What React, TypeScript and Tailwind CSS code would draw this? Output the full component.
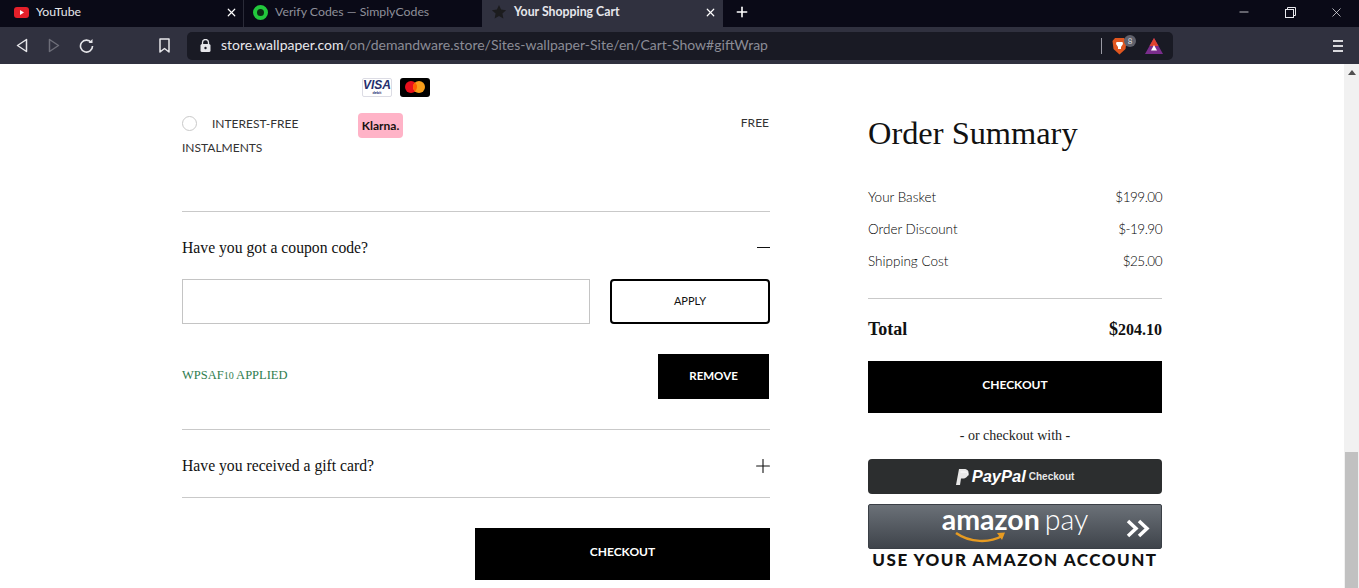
import React from 'react';
import { Minus, Plus, X } from 'lucide-react';

const sans = 'font-["Lato","Liberation_Sans",sans-serif]';
const serif = 'font-["Liberation_Serif",serif]';

const YoutubeIcon = () => (
  <svg width="15" height="11" viewBox="0 0 15 11">
    <rect width="15" height="11" rx="3" fill="#e5202a" />
    <path d="M6 3l4 2.500L6 8z" fill="#fff" />
  </svg>
);

const Tab: React.FC<{ title: string; icon: React.ReactNode; active?: boolean; close?: boolean; divider?: boolean; width: string; pad: string }> = ({
  title,
  icon,
  active,
  close,
  divider,
  width,
  pad,
}) => (
  <div className={`${width} ${pad} ${active ? 'bg-[#30313f]' : ''} ${divider ? 'border-r border-[#2a2b38]' : ''} flex h-full items-center pb-[3px]`}>
    <div className="flex w-[16px] justify-center">{icon}</div>
    <span className={`ml-[7px] flex-1 text-[12.300px] ${active ? 'font-bold text-[#e6e7ec]' : title === 'YouTube' ? 'text-[#e6e7ec]' : 'text-[#8f909a]'}`}>{title}</span>
    {close && <X className="text-white" size={13} strokeWidth={2.2} />}
  </div>
);

const TabStrip = () => (
  <div className="flex h-[27px] items-center bg-[#0a0a17]">
    <Tab width="w-[244px]" pad="pl-[13px] pr-[5px]" divider close title="YouTube" icon={<YoutubeIcon />} />
    <Tab
      width="w-[238px]"
      pad="pl-[8px]"
      title="Verify Codes — SimplyCodes"
      icon={<div className="h-[15px] w-[15px] rounded-full border-[4px] border-[#22c83c] bg-[#0c2c14]" />}
    />
    <Tab
      width="w-[241px]"
      pad="pl-[9px] pr-[6px]"
      active
      close
      title="Your Shopping Cart"
      icon={
        <svg width="16" height="16" viewBox="0 0 16 16">
          <path d="M8 1l2.100 4.600 5 .6-3.700 3.400 1 5L8 11.900 3.600 14.600l1-5L.9 6.200l5-.6z" fill="#1c1c1e" />
        </svg>
      }
    />
    <div className="flex h-full items-center pb-[3px]">
      <Plus className="ml-[11px] text-white" size={16} strokeWidth={2.4} />
    </div>
    <div className="flex-1" />
    <div className="flex h-full items-center pb-[3px]">
      <Minus className="mr-[34px] text-[#e8e8ec]" size={14} strokeWidth={1.4} />
      <svg className="mr-[33px]" width="11" height="11" viewBox="0 0 11 11" fill="none" stroke="#e8e8ec" strokeWidth="1">
        <rect x="0.500" y="2.500" width="8" height="8" />
        <path d="M2.500 2.500v-2h8v8h-2" />
      </svg>
      <X className="mr-[15px] text-[#e8e8ec]" size={15} strokeWidth={1.2} />
    </div>
  </div>
);

const Toolbar = () => (
  <div className="flex h-[37px] items-center bg-[#30313f]">
    <svg className="ml-[16px]" width="12" height="15" viewBox="0 0 12 15" fill="none" stroke="#e6e6ea" strokeWidth="1.500">
      <path d="M10.500 1.500v12L1.500 7.500z" strokeLinejoin="round" />
    </svg>
    <svg className="ml-[20px]" width="12" height="15" viewBox="0 0 12 15" fill="none" stroke="#6c6d78" strokeWidth="1.500">
      <path d="M1.500 1.500v12l9-6z" strokeLinejoin="round" />
    </svg>
    <svg className="ml-[19px]" width="15" height="15" viewBox="0 0 15 15" fill="none" stroke="#e6e6ea" strokeWidth="1.600">
      <path d="M12.300 4.500A6 6 0 1 0 13.500 8" />
      <path d="M13.500 1v4h-4" fill="#e6e6ea" stroke="none" />
    </svg>
    <svg className="ml-[65px]" width="11" height="15" viewBox="0 0 11 15" fill="none" stroke="#e6e6ea" strokeWidth="1.500">
      <path d="M1 1h9v13L5.500 10.500 1 14z" strokeLinejoin="round" />
    </svg>
    <div className="ml-[17px] flex h-[28px] w-[986px] items-center rounded-[5px] bg-[#191a24] pb-[2px] pl-[13px]">
      <svg className="mt-[2px]" width="11" height="13" viewBox="0 0 11 13">
        <path d="M2.500 5V3.500a3 3 0 0 1 6 0V5" fill="none" stroke="#e6e6ea" strokeWidth="1.300" />
        <rect x="0.500" y="5" width="10" height="8" rx="1.500" fill="#e6e6ea" />
        <circle cx="5.500" cy="9" r="1.200" fill="#191a24" />
      </svg>
      <span className="ml-[10px] flex-1 text-[14px] text-[#8b8c96]">
        <span className="text-[#e8e8ec]">store.wallpaper.com</span>/on/demandware.store/Sites-wallpaper-Site/en/Cart-Show#giftWrap
      </span>
      <div className="mt-[2px] h-[16px] w-px bg-[#9a9aa4]" />
      <div className="relative ml-[10px] mt-[2px]">
        <svg className="block" width="15" height="18" viewBox="0 0 15 18">
          <path d="M3 1h9l2.500 3-1 8L7.500 17.500 1.500 12l-1-8z" fill="#e0561f" />
          <path d="M4.500 5h6l.5 2-2 3v2H6v-2L4 7z" fill="#fff" />
        </svg>
        <div className="absolute left-[12px] top-[-2px] flex h-[12px] w-[12px] items-center justify-center rounded-full bg-[#5f606b] text-[8px] text-[#d8d8dc]">8</div>
      </div>
      <svg className="ml-[18px] mt-[2px]" width="18" height="16" viewBox="0 0 18 16">
        <path d="M9 0l9 16H0z" fill="#7a2d8c" />
        <path d="M9 0l4.500 8h-9z" fill="#e0432f" />
        <path d="M9 7l3 5.500H6z" fill="#fff" />
      </svg>
      <div className="w-[10px]" />
    </div>
    <div className="flex-1" />
    <div className="mr-[16px] flex w-[10px] flex-col gap-[3px]">
      <div className="h-[2px] bg-[#d8d8dc]" />
      <div className="h-[2px] bg-[#d8d8dc]" />
      <div className="h-[2px] bg-[#d8d8dc]" />
    </div>
  </div>
);

const VisaCard = () => (
  <div className="flex h-[19px] w-[30px] flex-col items-center justify-center rounded-[2px] border border-[#dcdce4] bg-white leading-none">
    <span className='font-["Liberation_Sans",sans-serif] text-[12px] font-bold italic leading-[11px] text-[#262f6e]'>VISA</span>
    <span className={`${sans} text-[4px] font-bold leading-[4px] text-[#262f6e]`}>debit</span>
  </div>
);

const MastercardIcon = () => (
  <div className="flex h-[19px] w-[30px] items-center justify-center rounded-[3px] bg-black pb-[2px]">
    <svg width="20" height="12" viewBox="0 0 20 12">
      <circle cx="6" cy="6" r="6" fill="#e8101c" />
      <circle cx="14" cy="6" r="6" fill="#f79e1b" />
      <path d="M10 1.500a6 6 0 0 1 0 9a6 6 0 0 1 0-9z" fill="#ff5f00" />
    </svg>
  </div>
);

const BlackButton: React.FC<{ label: string; className: string }> = ({ label, className }) => (
  <div className={`${className} ${sans} flex items-center justify-center bg-black font-bold text-white`}>{label}</div>
);

const LeftColumn = () => (
  <div className="w-[588px] pt-[14px] text-[#333]">
    <div className="flex gap-[8px] pl-[180px]">
      <VisaCard />
      <MastercardIcon />
    </div>

    <div className={`${sans} mt-[16px] flex text-[12px]`}>
      <div className="-mt-[1px] w-[176px] leading-[24px]">
        <span className="mr-[15px] inline-block h-[15px] w-[15px] rounded-full border border-[#c9c9c9] align-[-3px]" />
        INTEREST-FREE
        <br />
        INSTALMENTS
      </div>
      <div className="flex h-[25px] w-[45px] items-center justify-center rounded-[4px] bg-[#ffb3c7] text-[12px] font-bold text-[#17120f]">Klarna.</div>
      <div className="flex-1 pr-[1px] text-right leading-[20px]">FREE</div>
    </div>

    <div className="mt-[51px] border-t border-[#c9c9c9]" />

    <div className={`${serif} flex h-[72px] items-center justify-between text-[15.700px] text-[#111]`}>
      <span className="-mt-[1px]">Have you got a coupon code?</span>
      <div className="-mt-[1px] h-px w-[13px] bg-[#111]" />
    </div>

    <div className="-mt-[5px] flex justify-between">
      <div className="h-[45px] w-[408px] border border-[#c4c4c4]" />
      <div className={`${sans} flex h-[45px] w-[160px] items-center justify-center rounded-[4px] border-2 border-black text-[11px] text-[#111]`}>APPLY</div>
    </div>

    <div className="mt-[30px] flex items-center justify-between pr-[1px]">
      <span className={`${serif} -mt-[3px] text-[12.500px] text-[#2f7d4f]`}>
        WPSAF<span className="text-[10px]">10</span> APPLIED
      </span>
      <BlackButton label="REMOVE" className="h-[45px] w-[111px] pb-[1px] text-[11.500px]" />
    </div>

    <div className="mt-[30px] border-t border-[#c9c9c9]" />

    <div className={`${serif} flex h-[67px] items-center justify-between pt-[4px] text-[15.700px] text-[#111]`}>
      <span>Have you received a gift card?</span>
      <Plus size={22} strokeWidth={1.2} className="-mr-[4px] text-[#111]" />
    </div>

    <div className="border-t border-[#c9c9c9]" />

    <div className="mt-[30px] flex justify-end">
      <BlackButton label="CHECKOUT" className="h-[52px] w-[295px] pb-[4px] text-[12px]" />
    </div>
  </div>
);

const SummaryRow: React.FC<{ label: string; value: string }> = ({ label, value }) => (
  <div className={`${sans} flex h-[32px] items-center justify-between text-[13.500px] font-light text-black`}>
    <span>{label}</span>
    <span className="tracking-[-0.500px]">{value}</span>
  </div>
);

const PayPalButton = () => (
  <div className="flex h-[35px] items-center justify-center rounded-[4px] bg-[#2c2e2f]">
    <svg width="13" height="16" viewBox="0 0 13 16">
      <path d="M3 0h5c3 0 5 1.500 4.500 4.500C12 8 9.500 9.500 7 9.500H5L4 16H0z" fill="#e8e8e8" />
      <path d="M4.500 3H9c2 0 3.500 1 3 3.500" fill="none" stroke="#fff" strokeWidth="1" />
    </svg>
    <span className={`ml-[3px] font-["Liberation_Sans",sans-serif] text-[16.500px] font-bold italic text-white`}>PayPal</span>
    <span className={`ml-[3px] font-["Liberation_Sans",sans-serif] text-[10px] font-bold text-[#e8e8e8]`}>Checkout</span>
  </div>
);

const AmazonButton = () => (
  <div className="relative flex h-[45px] justify-center rounded-[2px] border border-[#3a3f46] bg-gradient-to-b from-[#6b7178] to-[#3f444b]">
    <span className={`${sans} -mt-[4px] text-[28.500px] font-bold leading-[36px] text-white`}>
      amazon<span className="ml-[5px] font-light">pay</span>
    </span>
    <svg className="absolute left-[86px] top-[26px]" width="52" height="13" viewBox="0 0 52 13" fill="none">
      <path d="M1 2c14 10 34 10 46 3" stroke="#e79b21" strokeWidth="2.500" />
      <path d="M42 2l8-.5L47 9z" fill="#e79b21" />
    </svg>
    <svg className="absolute right-[11px] top-[14px]" width="24" height="19" viewBox="0 0 24 19" fill="none" stroke="#fff" strokeWidth="3.500">
      <path d="M2 2l8 7.500-8 7.500M13 2l8 7.500-8 7.500" />
    </svg>
  </div>
);

const RightColumn = () => (
  <div className="w-[294px]">
    <h1 className={`${serif} mt-[49px] text-[32.400px] leading-[40px] text-[#111]`}>Order Summary</h1>
    <div className="mt-[28px]">
      <SummaryRow label="Your Basket" value="$199.00" />
      <SummaryRow label="Order Discount" value="$-19.90" />
      <SummaryRow label="Shipping Cost" value="$25.00" />
    </div>
    <div className="mt-[21px] border-t border-[#c9c9c9]" />
    <div className={`${serif} mt-[19px] flex h-[22px] items-center justify-between text-[18px] font-bold text-[#111]`}>
      <span>Total</span>
      <span>
        $<span className="text-[16px]">204.10</span>
      </span>
    </div>
    <BlackButton label="CHECKOUT" className="mt-[21px] h-[52px] pb-[4px] text-[12px]" />
    <div className={`${serif} mt-[14px] text-center text-[14px] leading-[18px] text-[#222]`}>- or checkout with -</div>
    <div className="mt-[14px]">
      <PayPalButton />
    </div>
    <div className="mt-[10px]">
      <AmazonButton />
    </div>
    <div className={`${sans} mt-[1px] text-center text-[17px] font-black leading-[20px] tracking-[1.520px] text-[#111]`}>USE YOUR AMAZON ACCOUNT</div>
  </div>
);

const Scrollbar = () => (
  <div className="flex h-full w-[15px] flex-col items-center justify-between bg-[#f1f1f1]">
    <div className="mt-[6px] h-0 w-0 border-x-[4px] border-b-[5px] border-x-transparent border-b-[#505050]" />
    <div className="h-[136px] w-[13px] bg-[#c1c1c1]" />
  </div>
);

export default function App() {
  return (
    <div className={`${sans} flex h-[588px] w-[1359px] flex-col overflow-hidden bg-white`}>
      <TabStrip />
      <Toolbar />
      <div className="flex flex-1 overflow-hidden">
        <div className="flex flex-1 pl-[182px]">
          <LeftColumn />
          <div className="w-[98px]" />
          <RightColumn />
        </div>
        <Scrollbar />
      </div>
    </div>
  );
}
